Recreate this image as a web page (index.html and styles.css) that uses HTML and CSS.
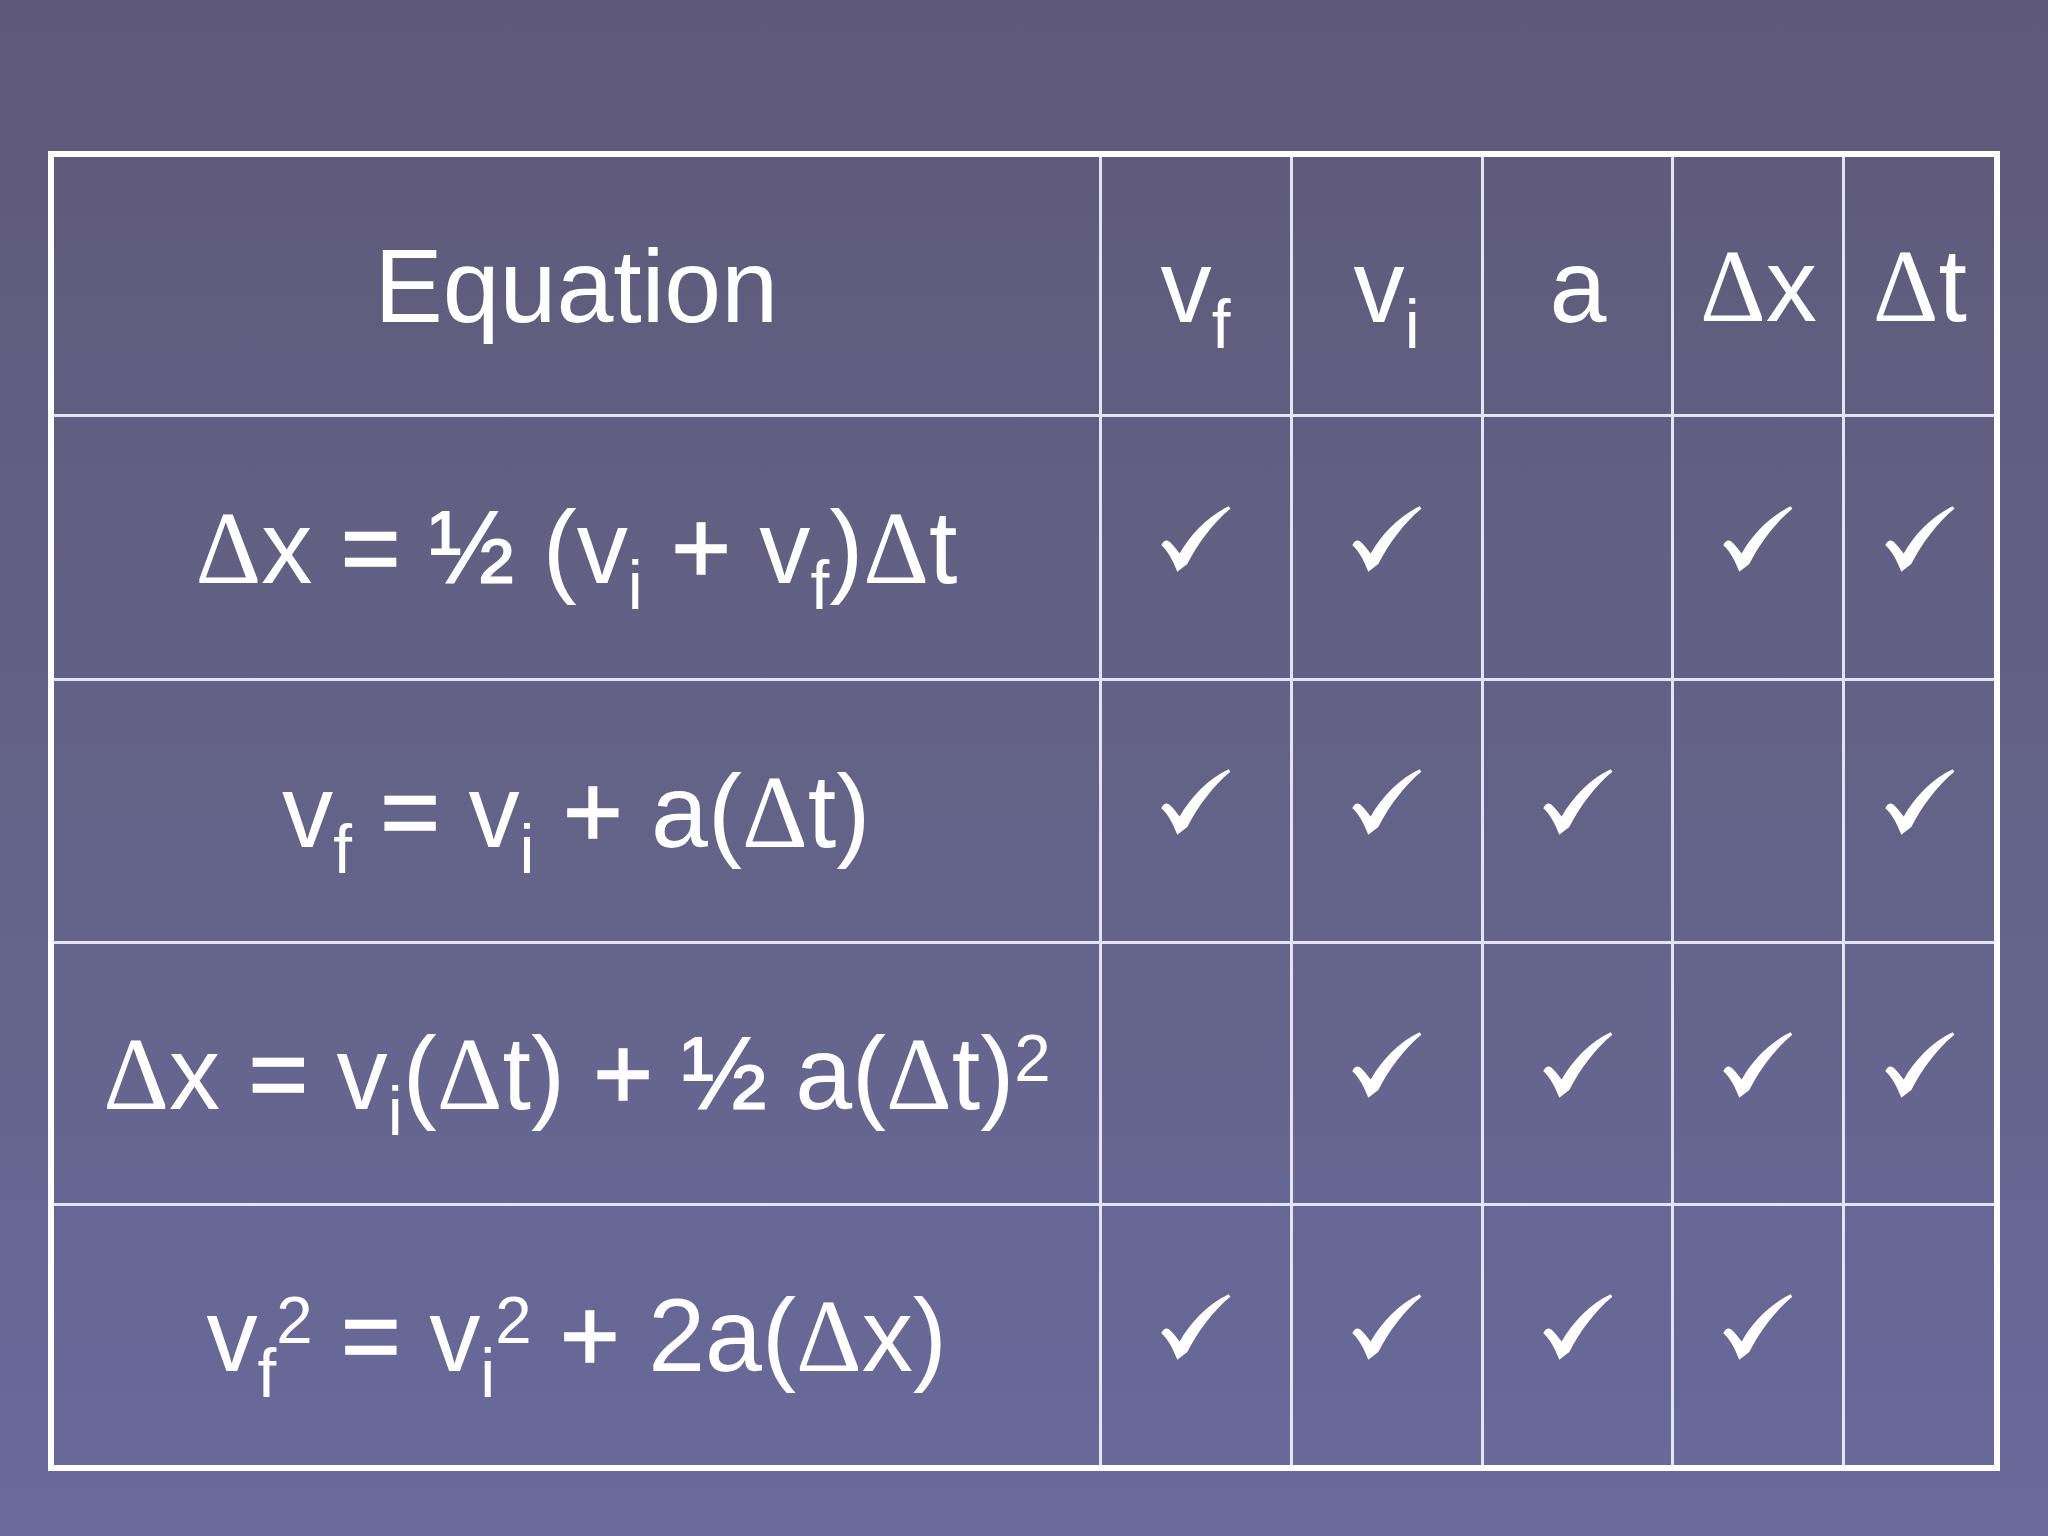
FILE: index.html
```html
<!DOCTYPE html>
<html>
<head>
<meta charset="utf-8">
<link rel="stylesheet" href="styles.css">
</head>
<body>
<svg width="0" height="0" class="defs">
  <defs>
    <symbol id="chk" viewBox="0 0 76 72">
      <path d="M3.3 42.3 C4.5 39.5 6 38 8 37.5 C11 37 14.5 41 21.7 50.5 C32 32 50 13 70.7 3.3 L72.3 5.7 C55 20 40 40 29.3 61 L19.3 68.8 C15 58 10 48 3.3 42.3 Z" fill="#fff"/>
    </symbol>
  </defs>
</svg>
<div class="page">
  <div class="grid">
    <div class="cell eq"><span class="t">Equation</span></div>
    <div class="cell"><span class="t">v<sub>f</sub></span></div>
    <div class="cell"><span class="t">v<sub>i</sub></span></div>
    <div class="cell"><span class="t">a</span></div>
    <div class="cell"><span class="t"><span class="d">Δ</span>x</span></div>
    <div class="cell last"><span class="t"><span class="d">Δ</span>t</span></div>

    <div class="cell eq"><span class="t"><span class="d">Δ</span>x <b>=</b> <b class="h">½</b> (v<sub>i</sub> <b>+</b> v<sub>f</sub>)<span class="d">Δ</span>t</span></div>
    <div class="cell ck"><svg class="check"><use href="#chk"/></svg></div>
    <div class="cell ck"><svg class="check"><use href="#chk"/></svg></div>
    <div class="cell ck"></div>
    <div class="cell ck"><svg class="check"><use href="#chk"/></svg></div>
    <div class="cell ck last"><svg class="check"><use href="#chk"/></svg></div>

    <div class="cell eq"><span class="t">v<sub>f</sub> <b>=</b> v<sub>i</sub> <b>+</b> a(<span class="d">Δ</span>t)</span></div>
    <div class="cell ck"><svg class="check"><use href="#chk"/></svg></div>
    <div class="cell ck"><svg class="check"><use href="#chk"/></svg></div>
    <div class="cell ck"><svg class="check"><use href="#chk"/></svg></div>
    <div class="cell ck"></div>
    <div class="cell ck last"><svg class="check"><use href="#chk"/></svg></div>

    <div class="cell eq"><span class="t"><span class="d">Δ</span>x <b>=</b> v<sub>i</sub>(<span class="d">Δ</span>t) <b>+</b> <b class="h">½</b> a(<span class="d">Δ</span>t)<sup>2</sup></span></div>
    <div class="cell ck"></div>
    <div class="cell ck"><svg class="check"><use href="#chk"/></svg></div>
    <div class="cell ck"><svg class="check"><use href="#chk"/></svg></div>
    <div class="cell ck"><svg class="check"><use href="#chk"/></svg></div>
    <div class="cell ck last"><svg class="check"><use href="#chk"/></svg></div>

    <div class="cell eq bottom"><span class="t">v<sub>f</sub><sup>2</sup> <b>=</b> v<sub>i</sub><sup>2</sup> <b>+</b> 2a(<span class="d">Δ</span>x)</span></div>
    <div class="cell ck bottom"><svg class="check"><use href="#chk"/></svg></div>
    <div class="cell ck bottom"><svg class="check"><use href="#chk"/></svg></div>
    <div class="cell ck bottom"><svg class="check"><use href="#chk"/></svg></div>
    <div class="cell ck bottom"><svg class="check"><use href="#chk"/></svg></div>
    <div class="cell ck bottom last"></div>
  </div>
</div>
</body>
</html>
```
FILE: styles.css
```css
html, body {
  margin: 0;
  padding: 0;
}
body {
  width: 2048px;
  height: 1536px;
  background: linear-gradient(180deg, #5f5979 0%, #636287 50%, #686a9b 100%);
  font-family: "Liberation Sans", Arial, sans-serif;
  color: #fff;
  overflow: hidden;
}
.defs {
  position: absolute;
  width: 0;
  height: 0;
}
.page {
  padding-top: 151px;
  padding-left: 48px;
}
.grid {
  box-sizing: border-box;
  width: 1952px;
  height: 1320px;
  border: 6px solid #ffffff;
  display: grid;
  grid-template-columns: 1048px 191px 191px 190px 171px 1fr;
  grid-template-rows: 260px 264px 263px 262px 1fr;
}
.cell {
  box-sizing: border-box;
  border-right: 3px solid #e4e3f1;
  border-bottom: 3px solid #e4e3f1;
  display: flex;
  align-items: center;
  justify-content: center;
  font-size: 104px;
  white-space: pre;
}
.cell.last {
  border-right: none;
}
.cell.bottom {
  border-bottom: none;
}
.t {
  display: inline-block;
  line-height: 116px;
  transform: scaleX(0.983);
}
.t b {
  font-weight: normal;
  -webkit-text-stroke: 1.6px #fff;
}
.t b.h {
  -webkit-text-stroke: 1.2px #fff;
}
.d {
  font-family: "Liberation Serif", "Times New Roman", serif;
}
sub {
  font-size: 0.66em;
  line-height: 0;
  vertical-align: -26px;
}
sup {
  font-size: 0.64em;
  line-height: 0;
  vertical-align: 28px;
}
.ck {
  padding-bottom: 18px;
}
.check {
  width: 76px;
  height: 72px;
}
```
